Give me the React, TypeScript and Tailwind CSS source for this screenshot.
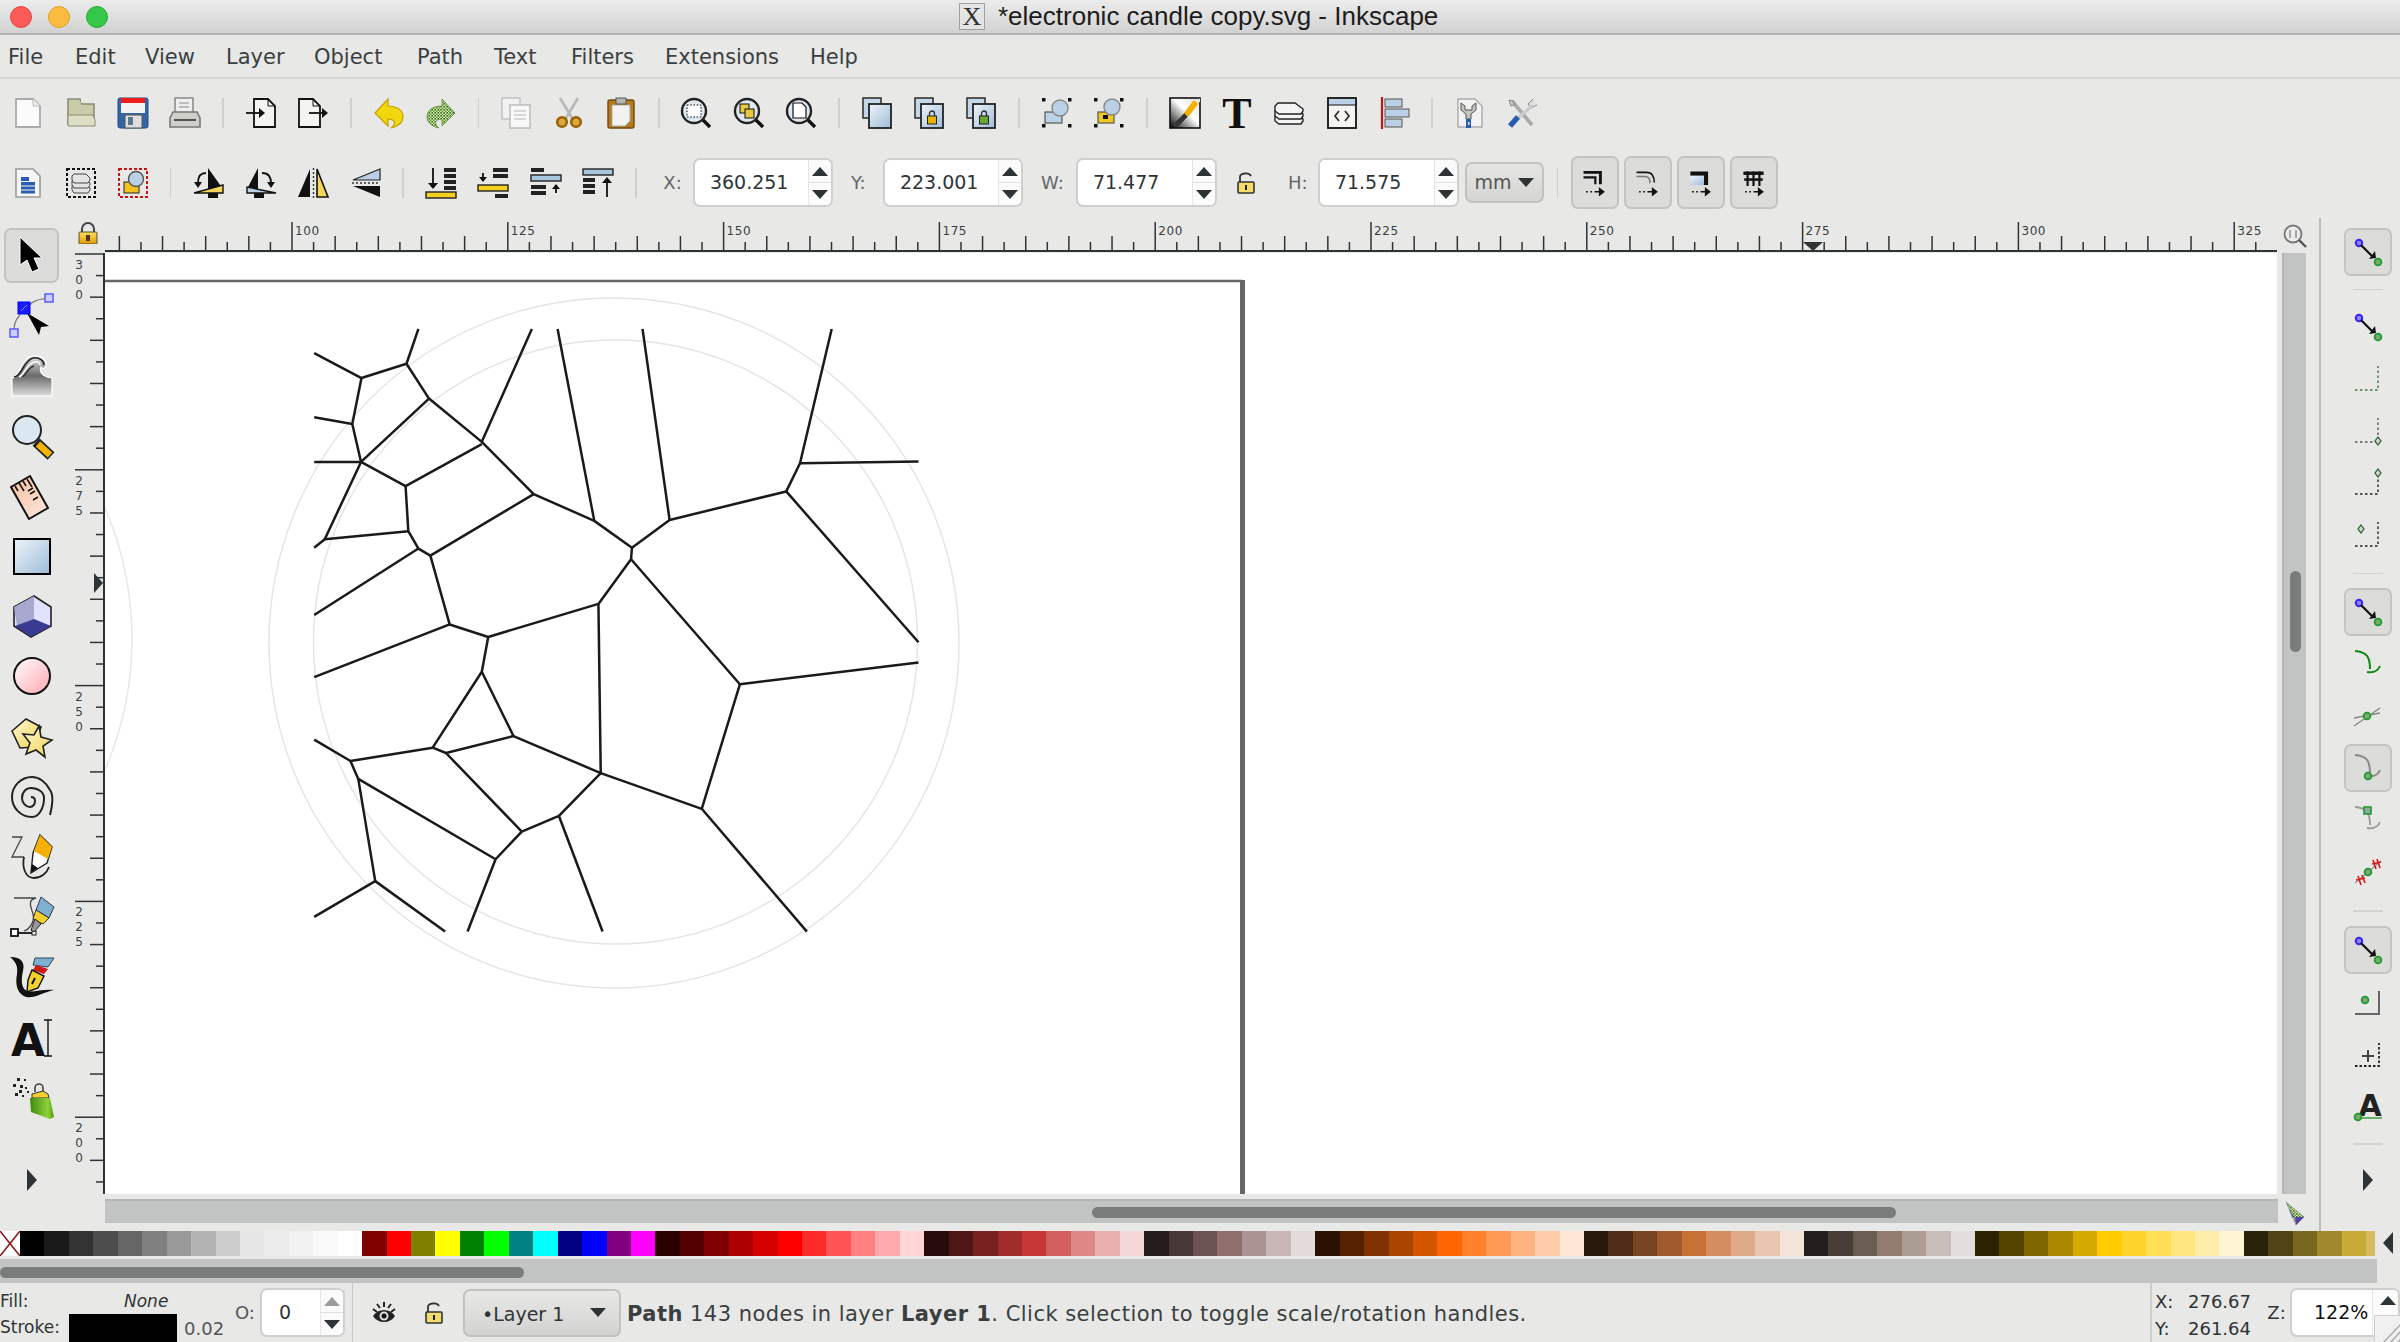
// Inkscape main window, macOS X11 build
import type { ReactNode } from "react"

const Ic = ({ s = 32, w, children }: { s?: number; w?: number; children: ReactNode }) => (
  <svg width={w ?? s} height={w ?? s} viewBox={`0 0 ${s} ${s}`} className="block overflow-visible">{children}</svg>
)

// Shared gradients
const Defs = () => (
  <svg className="absolute w-0 h-0">
    <defs>
      <linearGradient id="gBlue" x1="0" y1="0" x2="1" y2="1"><stop offset="0" stopColor="#eef4fa" /><stop offset="1" stopColor="#9dbcd8" /></linearGradient>
      <linearGradient id="gPink" x1="0" y1="0" x2="1" y2="1"><stop offset="0" stopColor="#fff" /><stop offset="1" stopColor="#ffa8b0" /></linearGradient>
      <linearGradient id="gYel" x1="0" y1="0" x2="1" y2="1"><stop offset="0" stopColor="#fffbd8" /><stop offset="1" stopColor="#f0d050" /></linearGradient>
      <linearGradient id="gPeach" x1="0" y1="0" x2="1" y2="1"><stop offset="0" stopColor="#f6bfa0" /><stop offset="1" stopColor="#fbe8de" /></linearGradient>
      <linearGradient id="gWave" x1="0" y1="0" x2="0" y2="1"><stop offset="0" stopColor="#e4e4e4" /><stop offset=".5" stopColor="#6a6a6a" /><stop offset="1" stopColor="#dedede" /></linearGradient>
      <linearGradient id="gBW" x1="0" y1="1" x2="1" y2="0"><stop offset="0" stopColor="#000" /><stop offset=".55" stopColor="#fff" /><stop offset="1" stopColor="#ddd" /></linearGradient>
      <linearGradient id="gGreen" x1="0" y1="0" x2="1" y2="0"><stop offset="0" stopColor="#3f8a10" /><stop offset=".75" stopColor="#8ed13c" /><stop offset="1" stopColor="#4e9a06" /></linearGradient>
      <linearGradient id="gGold" x1="0" y1="0" x2="0" y2="1"><stop offset="0" stopColor="#ffe060" /><stop offset="1" stopColor="#e09a00" /></linearGradient>
      <pattern id="pGreen" width="3" height="3" patternUnits="userSpaceOnUse"><rect width="3" height="3" fill="#dfe8d0" /><rect width="1.6" height="1.6" fill="#2f6b08" /><rect x="1.6" y="1.6" width="1.4" height="1.4" fill="#4e9a06" /></pattern>
    </defs>
  </svg>
)

const pageD = "M4 2h17l7 7v21H4z"
const undoD = "M2 16L15 2v7c9 0 15 4 15 11 0 5-4 9-12 11 3-2 4-5 3-7-1-1-3-2-6-2v7z"

const Lock = ({ x, y, c = "#e8b400" }: { x: number; y: number; c?: string }) => (
  <g transform={`translate(${x} ${y})`}>
    <path d="M2.5 6V3.5a2.5 2.5 0 0 1 5 0V6" fill="none" stroke="#333" strokeWidth="1.4" />
    <rect x=".5" y="6" width="9" height="8" fill={c} stroke="#222" />
  </g>
)

const OpenLock = () => (
  <svg width="18" height="22" viewBox="0 0 18 22" className="block">
    <path d="M3 10V5c0-4 9-5 11-1" fill="none" stroke="#333" strokeWidth="1.8" />
    <rect x="1" y="10" width="16" height="11" rx="1" fill="#f4dc6a" stroke="#333" strokeWidth="1.6" />
    <path d="M9 13v5" stroke="#222" strokeWidth="2" />
  </svg>
)

const MagBase = ({ children }: { children?: ReactNode }) => (
  <Ic>
    <circle cx="14" cy="14" r="12" fill="#dde8f1" stroke="#222" strokeWidth="2.4" />
    {children}
    <path d="M23 23l7 7" stroke="#111" strokeWidth="3.4" />
  </Ic>
)

const Handles = ({ children }: { children: ReactNode }) => (
  <Ic>
    {[[1, 1], [27, 1], [1, 27], [27, 27]].map(([x, y]) => (
      <rect key={`${x}${y}`} x={x} y={y} width="3.5" height="3.5" fill="#111" />
    ))}
    {children}
  </Ic>
)

const Slab = ({ y, c }: { y: number; c: string }) => (
  <rect x="1" y={y} width="30" height="6" fill={c} stroke="#222" strokeWidth="1.4" />
)
const Rows = ({ ys, x = 19, w = 12 }: { ys: number[]; x?: number; w?: number }) => (
  <g fill="#222">{ys.map(y => <rect key={y} x={x} y={y} width={w} height="4" />)}</g>
)

const Tri = ({ up, c = "#2e3436" }: { up?: boolean; c?: string }) => (
  <svg width="16" height="9" viewBox="0 0 16 9" className="block"><path d={up ? "M8 0l8 9H0z" : "M0 0h16L8 9z"} fill={c} /></svg>
)

const top = {
  new: <Ic><path d={pageD} fill="#fbfbfb" stroke="#aaa" strokeWidth="1.8" /><path d="M21 2v7h7" fill="#eee" stroke="#bbb" /></Ic>,
  open: <Ic><path d="M3 2h12l2 5h12v20H3z" fill="#c9cca9" stroke="#8b8e70" strokeWidth="1.6" /><path d="M3 18h25l2 5v6H3z" fill="#dcdec5" stroke="#8b8e70" /><path d="M16 3h6v3h-6z" fill="#e8e8dc" /></Ic>,
  save: <Ic><rect x="1" y="1" width="30" height="30" rx="2" fill="#3465a4" stroke="#204a87" /><rect x="4" y="1" width="24" height="5" fill="#ef1c1c" /><rect x="4" y="6" width="24" height="10" fill="#f2f2f2" /><rect x="8" y="18" width="17" height="13" fill="#ddd" stroke="#555" /><rect x="11" y="20" width="5" height="8" fill="#5a7890" /></Ic>,
  print: <Ic><path d="M6 1h18v16H6z" fill="#eee" stroke="#888" strokeWidth="1.5" /><path d="M10 6h10M10 10h10" stroke="#aaa" strokeWidth="1.4" /><path d="M4 15h24l3 6v9H1v-9z" fill="#d0d0ca" stroke="#777" strokeWidth="1.6" /><path d="M5 23h22" stroke="#555" strokeWidth="2" /></Ic>,
  import: <Ic><path d="M9 2h14l7 7v21H9z" fill="#f4f4f0" stroke="#111" strokeWidth="1.8" /><path d="M23 2v7h7" fill="none" stroke="#111" /><path d="M1 16h14" stroke="#111" strokeWidth="1.8" /><path d="M14 11l6 5-6 5z" fill="#111" /></Ic>,
  export: <Ic><path d="M2 2h14l7 7v21H2z" fill="#f4f4f0" stroke="#111" strokeWidth="1.8" /><path d="M16 2v7h7" fill="none" stroke="#111" /><path d="M12 16h16" stroke="#111" strokeWidth="1.8" /><path d="M25 11l6 5-6 5z" fill="#111" /></Ic>,
  undo: <Ic><path d={undoD} fill="#f2d70e" stroke="#c4a000" strokeWidth="1.2" /></Ic>,
  redo: <Ic><path transform="matrix(-1 0 0 1 32 0)" d={undoD} fill="url(#pGreen)" stroke="#5f8a3a" strokeWidth=".8" /></Ic>,
  copy: <Ic><rect x="2" y="1" width="18" height="21" fill="#f2f2f2" stroke="#c0c0c0" strokeWidth="1.4" /><rect x="10" y="8" width="20" height="23" fill="#f8f8f8" stroke="#b8b8b8" strokeWidth="1.4" /><path d="M14 14h12M14 18h12M14 22h12" stroke="#ccc" strokeWidth="1.4" /></Ic>,
  cut: <Ic><path d="M7 1l12 20M25 1L13 21" stroke="#b8b8b8" strokeWidth="2.6" /><circle cx="9" cy="25" r="4.8" fill="#dba73a" stroke="#9a6208" strokeWidth="2.6" /><circle cx="23" cy="25" r="4.8" fill="#dba73a" stroke="#9a6208" strokeWidth="2.6" /></Ic>,
  paste: <Ic><rect x="3" y="3" width="26" height="28" rx="2" fill="#b97a1a" stroke="#6e4a0e" strokeWidth="1.4" /><path d="M7 8h18v16l-5 5H7z" fill="#f2f2f0" stroke="#aaa" /><rect x="11" y="1" width="10" height="6" fill="#b5b5b0" stroke="#555" /></Ic>,
  zoomSel: <MagBase><rect x="7" y="8" width="14" height="12" fill="#fff" stroke="#111" strokeDasharray="1.6 1.6" /></MagBase>,
  zoomDraw: <MagBase><rect x="7" y="7" width="9" height="9" fill="#e8c840" stroke="#111" /><rect x="12" y="12" width="9" height="9" fill="#e8c840" stroke="#111" /></MagBase>,
  zoomPage: <MagBase><path d="M8 6h9l4 4v11H8z" fill="#fff" stroke="#111" strokeWidth="1.2" /></MagBase>,
  dup: <Ic><rect x="2" y="1" width="18" height="20" fill="#c5d8ea" stroke="#333" strokeWidth="1.6" /><rect x="8" y="7" width="22" height="24" fill="url(#gBlue)" stroke="#222" strokeWidth="1.8" /></Ic>,
  clone: <Ic><rect x="2" y="1" width="18" height="20" fill="#c5d8ea" stroke="#333" strokeWidth="1.6" /><rect x="8" y="7" width="22" height="24" fill="url(#gBlue)" stroke="#222" strokeWidth="1.8" /><Lock x={14} y={13} /></Ic>,
  unlink: <Ic><rect x="2" y="1" width="18" height="20" fill="#c5d8ea" stroke="#333" strokeWidth="1.6" /><rect x="8" y="7" width="22" height="24" fill="url(#gBlue)" stroke="#222" strokeWidth="1.8" /><Lock x={14} y={13} c="#6aa832" /></Ic>,
  group: <Handles><rect x="4" y="15" width="17" height="11" fill="#bcd2e8" stroke="#555" strokeWidth="1.2" /><circle cx="19" cy="11" r="8" fill="#b9d0e6" stroke="#888" strokeWidth="1.4" /></Handles>,
  ungroup: <Handles><rect x="5" y="15" width="16" height="11" fill="#f0c820" stroke="#555" strokeWidth="1.2" /><rect x="10" y="18" width="5" height="4" fill="#111" /><circle cx="19" cy="10" r="8" fill="#b9d0e6" stroke="#888" strokeWidth="1.4" /></Handles>,
  fill: <Ic><rect x="1" y="1" width="30" height="30" fill="url(#gBW)" stroke="#111" strokeWidth="1.6" /><path d="M31 1v4h-3z" fill="#e8e8e6" /><path d="M27 5l-10 13" stroke="#f4b000" strokeWidth="6" /><path d="M17 18L7 28" stroke="#333" strokeWidth="5" /></Ic>,
  text: <Ic><text x="16" y="31" textAnchor="middle" fontFamily="Liberation Serif" fontWeight="700" fontSize="44" fill="#111">T</text></Ic>,
  layers: <Ic><g fill="#f4f4f4" stroke="#222" strokeWidth="1.4"><path d="M2 19l3-3h19l6 6v2l-2 3H6l-4-3z" /><path d="M2 14l3-3h19l6 6v2l-2 3H6l-4-3z" /><path d="M2 9l3-3h17l8 6v2l-2 3H6l-4-3z" /></g></Ic>,
  xml: <Ic><rect x="2" y="1" width="28" height="30" fill="#f4f4f2" stroke="#111" strokeWidth="1.8" /><rect x="3" y="2" width="26" height="6" fill="#b9d0e6" /><path d="M3 8h26" stroke="#111" /><path d="M13 14l-4 5 4 5M19 14l4 5-4 5" fill="none" stroke="#333" strokeWidth="1.8" /></Ic>,
  align: <Ic><path d="M4 0v32" stroke="#cc1111" strokeWidth="2.2" /><rect x="7" y="2" width="17" height="8" fill="#b9d0e6" stroke="#555" /><rect x="7" y="12" width="24" height="8" fill="#b9d0e6" stroke="#555" /><rect x="7" y="22" width="17" height="8" fill="#b9d0e6" stroke="#555" /></Ic>,
  prefs: <Ic><path d={pageD} fill="#f2f2f2" stroke="#aaa" strokeWidth="1.4" /><path d="M7 6v7l5 4v5h5v-5l5-4V6l-4 3v4h-7V9z" fill="#c5c5c0" stroke="#555" /><path d="M12 22h5v9h-5z" fill="#2a5db0" /><path d="M14 25h1.5v3H14z" fill="#ddd" /></Ic>,
  tools: <Ic><path d="M6 4l20 24" stroke="#aaa" strokeWidth="3.6" /><path d="M27 2l-5 5 3 4 6-3" fill="#ddd" stroke="#888" /><path d="M27 8L11 22" stroke="#ccc" strokeWidth="3.2" /><path d="M12 20l-8 9" stroke="#2a5db0" strokeWidth="5.5" /><path d="M3 3l4 1 1 4-3 1z" fill="#ccc" stroke="#888" /></Ic>,

  selAll: <Ic><path d={pageD} fill="#f6f6f6" stroke="#999" strokeWidth="1.6" /><path d="M9 10h8v4H9zM9 15h14v3.4H9zM9 19.4h14v3.2H9zM9 23.6h14v3H9z" fill="#2a5db0" /></Ic>,
  selLayers: <Ic><rect x="2" y="2" width="28" height="28" fill="none" stroke="#111" strokeWidth="2" strokeDasharray="3 2" /><g fill="#e4e4e4" stroke="#444"><path d="M7 19l2-2h12l4 4v2l-2 3H9l-2-3z" /><path d="M7 14l2-2h12l4 4v2l-2 3H9l-2-3z" /><path d="M7 9l2-2h12l4 4v2l-2 3H9l-2-3z" /></g></Ic>,
  invert: <Ic><rect x="2" y="2" width="28" height="28" fill="none" stroke="#d01010" strokeWidth="2" strokeDasharray="3 2" /><rect x="7" y="15" width="15" height="11" fill="#f3c220" stroke="#222" /><circle cx="19" cy="12" r="7.5" fill="#b9d0e6" stroke="#555" strokeWidth="1.4" /></Ic>,
  rotL: <Ic><path d="M16 1l15 21H16z" fill="#111" /><path d="M2 26l29-8v8z" fill="#f3d65a" stroke="#111" strokeWidth="1.4" /><rect x="16" y="26" width="10" height="5" fill="#111" /><path d="M14 6C8 6 6 10 6 16" fill="none" stroke="#111" strokeWidth="1.8" /><path d="M2 15l4 6 4-6z" fill="#111" /></Ic>,
  rotR: <Ic><path d="M13 1L2 22h11z" fill="#111" /><path d="M2 20v6h29z" fill="#b9d0e6" stroke="#111" strokeWidth="1.4" /><rect x="9" y="26" width="10" height="5" fill="#111" /><path d="M17 6c7 0 9 4 9 10" fill="none" stroke="#111" strokeWidth="1.8" /><path d="M22 15l4 6 4-6z" fill="#111" /></Ic>,
  flipH: <Ic><path d="M13 2L1 30h12z" fill="#111" /><path d="M20 2l11 28H20z" fill="#f3d65a" stroke="#111" strokeWidth="1.6" /><path d="M16.5 1v30" stroke="#333" strokeDasharray="2 2" strokeWidth="1.4" /></Ic>,
  flipV: <Ic><path d="M30 2L3 13h27z" fill="#b9d0e6" stroke="#222" strokeWidth="1.2" /><path d="M2 16h28" stroke="#333" strokeDasharray="2 2" strokeWidth="1.4" /><path d="M30 30L3 19h27z" fill="#111" /></Ic>,
  lowerBottom: <Ic><Rows ys={[1, 7, 13, 19]} /><path d="M8 1v18" stroke="#111" strokeWidth="1.8" /><path d="M3 16l5 6 5-6z" fill="#111" /><Slab y={25} c="#f3d020" /></Ic>,
  lower: <Ic><Rows ys={[1, 7]} x={16} w={15} /><Rows ys={[27]} x={18} w={13} /><path d="M6 6v8" stroke="#111" strokeWidth="1.8" /><path d="M2 10l4 5 4-5z" fill="#111" /><Slab y={18} c="#f3d020" /></Ic>,
  raise: <Ic><Rows ys={[1]} x={1} w={13} /><Slab y={8} c="#a9c6df" /><Rows ys={[18, 24]} x={1} w={15} /><path d="M26 18v8" stroke="#111" strokeWidth="1.8" /><path d="M22 22l4-5 4 5z" fill="#111" /></Ic>,
  raiseTop: <Ic><Slab y={2} c="#a9c6df" /><Rows ys={[11, 17, 23]} x={1} w={12} /><path d="M25 12v18" stroke="#111" strokeWidth="1.8" /><path d="M20 16l5-6 5 6z" fill="#111" /></Ic>,
}

const dashArrow = <path d="M6 27h2M11 27h2M16 27h8M22 23l5 4-5 4z" stroke="#111" strokeWidth="1.6" fill="#111" />

const affect = [
  <Ic w={27} key="a"><path d="M3 4h20v14" fill="none" stroke="#111" strokeWidth="3.4" /><path d="M3 10h14v8" fill="none" stroke="#111" strokeWidth="2.6" />{dashArrow}</Ic>,
  <Ic w={27} key="b"><path d="M3 4h12c6 0 9 4 9 12" fill="none" stroke="#111" strokeWidth="1.8" /><path d="M3 9h10c4 0 6 3 6 8" fill="none" stroke="#777" strokeWidth="1.8" />{dashArrow}</Ic>,
  <Ic w={27} key="c"><path d="M4 3h21v16h-5V8H4z" fill="#111" /><path d="M4 8h16v11H4z" fill="url(#gBlue)" />{dashArrow}</Ic>,
  <Ic w={27} key="d"><rect x="4" y="3" width="24" height="4" fill="#111" /><path d="M5 11h22v3H5z" fill="#111" /><path d="M9 3v17M16 3v17M23 3v17" stroke="#111" strokeWidth="2.6" />{dashArrow}</Ic>,
]

const gNode = (x: number, y: number) => <circle cx={x} cy={y} r="3.4" fill="#7ca96f" stroke="#1f9a30" strokeWidth="1.8" />
const diamond = (x: number, y: number) => <path d={`M${x} ${y - 4}l3 4-3 4-3-4z`} fill="#cfd8cf" stroke="#2c5a2c" strokeWidth="1.2" />
const snapMain = <Ic><circle cx="7" cy="7" r="3.2" fill="#8a85ff" stroke="#3a22ff" strokeWidth="2" /><path d="M9 9l11 11" stroke="#111" strokeWidth="2.2" /><path d="M17 23l7-1-1-7z" fill="#111" />{gNode(26, 26)}</Ic>
const dashL = (c: string) => <path d="M3 27h23V3" fill="none" stroke={c} strokeWidth="1.4" strokeDasharray="2.5 2.5" />

const snapA = [
  snapMain,
  <Ic key="1">{dashL("#3f7a3f")}</Ic>,
  <Ic key="2">{dashL("#555")}{diamond(26, 26)}</Ic>,
  <Ic key="3">{dashL("#222")}{diamond(26, 6)}</Ic>,
  <Ic key="4">{dashL("#222")}{diamond(9, 10)}</Ic>,
]
const snapB = [
  snapMain,
  <Ic key="1"><path d="M3 3c12 1 15 6 15 18M15 24c6 1 11-1 13-6" fill="none" stroke="#118a11" strokeWidth="2" /></Ic>,
  <Ic key="2"><path d="M2 26L28 8M2 18L28 13" fill="none" stroke="#888" strokeWidth="1.4" />{gNode(15, 16)}</Ic>,
  <Ic key="3"><path d="M3 3c12 1 15 6 15 18M15 24c6 1 11-1 13-6" fill="none" stroke="#888" strokeWidth="2" />{gNode(16, 24)}</Ic>,
  <Ic key="4"><path d="M3 3c12 1 15 6 15 18M15 24c6 1 11-1 13-6" fill="none" stroke="#999" strokeWidth="1.8" /><rect x="12" y="3" width="7" height="7" fill="#8ca8a0" stroke="#1f9a30" strokeWidth="1.6" /></Ic>,
  <Ic key="5"><path d="M3 27L29 5" stroke="#999" strokeWidth="1.4" /><path d="M6 20l3 9M10 19l3 8M4 24l9-2M21 4l3 9M25 3l3 9M20 8l9-2" stroke="#d81a1a" strokeWidth="1.6" />{gNode(16, 16)}</Ic>,
]
const snapC = [
  snapMain,
  <Ic key="1"><path d="M3 28h24V5" fill="none" stroke="#666" strokeWidth="2" />{gNode(13, 14)}</Ic>,
  <Ic key="2"><path d="M3 28h24V5" fill="none" stroke="#222" strokeWidth="1.8" strokeDasharray="2.5 2" /><path d="M10 18h12M16 12v12" stroke="#444" strokeWidth="2" /></Ic>,
  <Ic key="3"><text x="18" y="26" textAnchor="middle" fontFamily="DejaVu Sans" fontWeight="700" fontSize="30" fill="#222">A</text><path d="M6 28h24" stroke="#49a349" strokeWidth="1.6" />{gNode(6, 27)}</Ic>,
]

const tools = [
  <Ic s={40} key="sel"><path d="M8 2v28l7-5 5 12 7-3-5-11h8z" fill="#000" stroke="#fff" strokeWidth="1" /></Ic>,
  <Ic s={40} key="node"><path d="M15 15C18 5 28 4 38 3M8 20c-6 6-6 12-6 18" fill="none" stroke="#777" strokeWidth="1.2" /><rect x="6" y="7" width="12" height="12" fill="#1a1aff" stroke="#00f" /><path d="M9 16l6-6" stroke="#88f" /><rect x="33" y="-1" width="8" height="8" fill="#cfcfff" stroke="#5a5aff" strokeWidth="1.5" /><rect x="-2" y="34" width="8" height="8" fill="#cfcfff" stroke="#5a5aff" strokeWidth="1.5" /><path d="M15 18l22 13-8 1-2 8z" fill="#000" /></Ic>,
  <Ic s={40} key="tweak"><path d="M0 23C8 23 9 3 20 1c8-1 14 3 14 9 0 4-4 4-5 2-2 4 1 10 11 11v18H0z" fill="url(#gWave)" stroke="#fff" strokeWidth="1.2" /><path d="M2 22C10 21 12 5 21 3c7-1 11 3 11 7" fill="none" stroke="#222" strokeWidth="1.5" /><path d="M7 22C12 20 15 9 22 7c4-1 6 1 6 3" fill="none" stroke="#fff" strokeWidth="1.6" /><path d="M11 22c3-3 6-10 11-11" fill="none" stroke="#333" strokeWidth="1.4" /></Ic>,
  <Ic s={40} key="zoom"><path d="M24 26l15 14" stroke="#222" strokeWidth="10" /><path d="M26 28l12 11" stroke="#f6b400" strokeWidth="6.5" /><circle cx="15" cy="14" r="14" fill="#dbe8f2" stroke="#222" strokeWidth="2" /></Ic>,
  <Ic s={40} key="measure"><path d="M-1 11L18 0l18 32-19 11z" fill="url(#gPeach)" stroke="#111" strokeWidth="2" /><path d="M3 10l3 5M7 7l5 8M11 5l3 5M15 3l5 8M21 12l-5 3M18 18l5-3M21 24l5-3" stroke="#111" strokeWidth="1.5" /></Ic>,
  <Ic s={40} key="rect"><rect x="2" y="3" width="36" height="35" fill="url(#gBlue)" stroke="#000" strokeWidth="2" /></Ic>,
  <Ic s={40} key="3d"><path d="M2 11L22 0l17 11v19L19 41 2 30z" fill="#e0e0ff" stroke="#222" strokeWidth="1.6" /><path d="M2 11l20-11 0 23L5 30z" fill="#a8a8d0" /><path d="M22 23l17 7-20 11L3 30z" fill="#3a3a90" /></Ic>,
  <Ic s={40} key="circle"><circle cx="20" cy="20" r="18" fill="url(#gPink)" stroke="#111" strokeWidth="2" /></Ic>,
  <Ic s={40} key="star"><path d="M0 14L14 2l15 8-7 20-14 1z" fill="url(#gYel)" stroke="#222" strokeWidth="1.6" /><path d="M27 9l2 11 11 3-9 6 2 11-9-7-10 4 4-11-7-9 11 1z" fill="url(#gYel)" stroke="#222" strokeWidth="1.6" /></Ic>,
  <Ic s={40} key="spiral"><path d="M38 38C41 26 41 17 38 13C34 5 27 0 20 0C9 0 0 9 0 20C0 31 9 40 20 40C27 40 32 31 32 21C32 15 26 11 19 11C14 11 10 15 10 21C10 26 14 30 18 30C21 30 23 27 23 24C23 21 21 20 19 20" fill="none" stroke="#222" strokeWidth="2" /></Ic>,
  <Ic s={40} key="pencil"><path d="M0 0H10L0 20H12" fill="none" stroke="#444" strokeWidth="1.3" /><path d="M12 20c-2 10 1 21 10 21 7 0 13-5 15-11" fill="none" stroke="#222" strokeWidth="1.8" /><path d="M19 36L21 16L28 -2L40 10L35 26Z" fill="#fff" stroke="#222" strokeWidth="1.4" /><path d="M22 14L28 -2L40 10L36 22Z" fill="#f5b000" /><path d="M19 36L20 27L26 31Z" fill="#111" /></Ic>,
  <Ic s={40} key="pen"><path d="M2 1h22c-9 2-5 9-3 16 2 7-3 15-9 17" fill="none" stroke="#444" strokeWidth="1.3" /><rect x="-1" y="32" width="7" height="7" fill="#fff" stroke="#111" strokeWidth="1.8" /><path d="M6 36h14" stroke="#111" strokeWidth="1.8" /><rect x="20" y="34" width="4" height="4" fill="#fff" stroke="#111" /><path d="M29 0l13 10-5 11-13-8z" fill="#7fb0cf" stroke="#335" /><path d="M24 13l13 8-6 6-10-5z" fill="#f3d030" stroke="#333" /><path d="M23 22l6 5-7 8-3-2z" fill="#999" stroke="#222" /></Ic>,
  <Ic s={40} key="callig"><path d="M-2 0c12 0 15 6 13 14-2 9-2 17 4 20 6 2 14-2 27-1-10 2-20 9-28 7C5 37 3 27 5 17 6 9 4 5-2 0z" fill="#111" /><path d="M23 1h19l-6 9-15-2z" fill="#7fb0cf" stroke="#345" /><path d="M24 8l12 4-4 5-11-4z" fill="#d01818" /><path d="M20 13l12 6-6 12-11 4 1-12z" fill="#f3d030" stroke="#111" strokeWidth="1.4" /><path d="M20 27l3-6" stroke="#111" strokeWidth="2" /></Ic>,
  <Ic s={40} key="textTool"><text x="16" y="38" textAnchor="middle" fontFamily="DejaVu Sans" fontWeight="700" fontSize="44" fill="#111">A</text><path d="M32 2h8M36 2v36M32 38h8" stroke="#111" strokeWidth="1.4" /></Ic>,
  <Ic s={40} key="spray"><path d="M1 6h3v3H1zM5 0h3v3H5zM8 7h3v3H8zM3 15h3v3H3zM7 12h3v3H7zM12 1h2v2h-2zM13 9h2v2h-2zM10 17h2v2h-2zM15 13h2v2h-2z" fill="#222" /><path d="M23 14v-4a4 4 0 0 1 8 0v4" fill="none" stroke="#444" strokeWidth="1.6" /><path d="M20 16l11-3 5 3 1 4H20z" fill="#f3d030" stroke="#333" /><path d="M18 20h20l4 19-4 2-19-7z" fill="url(#gGreen)" /></Ic>,
]

const ticksH = Array.from({ length: 101 }, (_, i) => i)
const hLabels = ["100", "125", "150", "175", "200", "225", "250", "275", "300", "325"]
const vLabels = ["300", "275", "250", "225", "200"]

// Ruler above the canvas
const HRuler = () => (
  <svg width="2172" height="35" viewBox="0 0 2172 35" className="block shrink-0">
    {ticksH.map(i => {
      const x = 187 + (i - 8) * 21.58
      if (x < 2 || x > 2172) return null
      const k = i - 8
      const y1 = k % 10 === 0 ? 4 : k % 2 === 0 ? 18 : 24
      return <path key={i} d={`M${x} ${y1}V33`} stroke="#2e3436" strokeWidth="1.5" />
    })}
    {hLabels.map((t, i) => (
      <text key={t} x={190 + i * 215.8} y="17" fontFamily="DejaVu Sans" fontSize="12" letterSpacing=".6" fill="#3a3f41">{t}</text>
    ))}
    <path d="M0 33h2172" stroke="#2e3436" strokeWidth="2" />
    <path d="M1698 24h20l-10 9z" fill="#2e3436" />
  </svg>
)

// Ruler left of the canvas
const VRuler = () => (
  <svg width="30" height="941" viewBox="0 0 30 941" className="block shrink-0">
    {Array.from({ length: 45 }, (_, k) => {
      const y = 1 + k * 21.58
      const x1 = k % 10 === 0 ? 0 : k % 2 === 0 ? 15 : 21
      return <path key={k} d={`M${x1} ${y}H29`} stroke="#2e3436" strokeWidth="1.5" />
    })}
    {vLabels.map((t, i) => t.split("").map((d, j) => (
      <text key={`${t}${j}`} x="4" y={16 + i * 215.8 + j * 15} textAnchor="middle" fontFamily="DejaVu Sans" fontSize="12" fill="#3a3f41">{d}</text>
    )))}
    <path d="M29 0v941" stroke="#2e3436" strokeWidth="2" />
    <path d="M19 320l9 10-9 10z" fill="#2e3436" />
  </svg>
)

const voronoi = [
  "M118 186L221 242L319 210L345 132",
  "M221 242L201 345L220 430",
  "M118 330L201 345",
  "M319 210L368 288L483 385L592 132",
  "M368 288L220 430",
  "M118 430L220 430",
  "M220 430L317 484L483 390",
  "M483 385L596 502L728 562L810 622L892 560L1146 496L1176 433L1245 132",
  "M1176 433L1434 429",
  "M1146 496L1434 834",
  "M728 562L648 132",
  "M892 560L833 132",
  "M317 484L323 585L345 624L371 640L596 502",
  "M323 585L141 603L220 430",
  "M141 603L118 622",
  "M345 624L118 773",
  "M371 640L413 794L497 822L737 748L808 648L810 622",
  "M413 794L118 912",
  "M497 822L483 900L376 1070L197 1100L118 1052",
  "M483 900L552 1044L405 1082L376 1070",
  "M552 1044L742 1127L737 748",
  "M808 648L1045 928L1434 879",
  "M1045 928L962 1207L742 1127",
  "M962 1207L1191 1482",
  "M742 1127L651 1223L570 1258L405 1082",
  "M651 1223L746 1482",
  "M570 1258L513 1320L214 1140L197 1100",
  "M214 1140L251 1369L118 1449",
  "M251 1369L403 1482",
  "M513 1320L452 1482",
]

// Document drawing on the canvas
const Drawing = () => (
  <svg width="2172" height="941" viewBox="0 0 2172 941" className="absolute inset-0">
    <circle cx="-304" cy="386" r="331" fill="none" stroke="#e6e6e6" strokeWidth="1.4" />
    <circle cx="509" cy="390" r="345" fill="none" stroke="#e4e4e4" strokeWidth="1.4" />
    <circle cx="510.5" cy="389" r="302" fill="none" stroke="#e4e4e4" strokeWidth="1.4" />
    <g transform="translate(155 17) scale(.4592 .4464)">
      {voronoi.map(d => <path key={d} d={d} fill="none" stroke="#1a1a1a" strokeWidth="2.5" vectorEffect="non-scaling-stroke" strokeLinejoin="round" />)}
    </g>
    <path d="M0 28H1137.5" stroke="#666" strokeWidth="2.4" />
    <path d="M1137.5 27V941" stroke="#666" strokeWidth="5" />
  </svg>
)

const paletteColors = [
  "bg-[#000000]", "bg-[#1a1a1a]", "bg-[#333333]", "bg-[#4d4d4d]", "bg-[#666666]", "bg-[#808080]", "bg-[#999999]", "bg-[#b3b3b3]", "bg-[#cccccc]", "bg-[#e6e6e6]", "bg-[#ececec]", "bg-[#f2f2f2]", "bg-[#f9f9f9]", "bg-[#ffffff]",
  "bg-[#800000]", "bg-[#ff0000]", "bg-[#808000]", "bg-[#ffff00]", "bg-[#008000]", "bg-[#00ff00]", "bg-[#008080]", "bg-[#00ffff]", "bg-[#000080]", "bg-[#0000ff]", "bg-[#800080]", "bg-[#ff00ff]",
  "bg-[#2b0000]", "bg-[#550000]", "bg-[#800001]", "bg-[#aa0000]", "bg-[#d40000]", "bg-[#ff0001]", "bg-[#ff2a2a]", "bg-[#ff5555]", "bg-[#ff8080]", "bg-[#ffaaaa]", "bg-[#ffd5d5]",
  "bg-[#280b0b]", "bg-[#501616]", "bg-[#782121]", "bg-[#a02c2c]", "bg-[#c83737]", "bg-[#d35f5f]", "bg-[#de8787]", "bg-[#e9afaf]", "bg-[#f4d7d7]",
  "bg-[#241c1c]", "bg-[#483737]", "bg-[#6c5353]", "bg-[#916f6f]", "bg-[#ac9393]", "bg-[#c8b7b7]", "bg-[#e3dbdb]",
  "bg-[#2b1100]", "bg-[#552200]", "bg-[#803300]", "bg-[#aa4400]", "bg-[#d45500]", "bg-[#ff6600]", "bg-[#ff7f2a]", "bg-[#ff9955]", "bg-[#ffb380]", "bg-[#ffccaa]", "bg-[#ffe6d5]",
  "bg-[#28170b]", "bg-[#502d16]", "bg-[#784421]", "bg-[#a05a2c]", "bg-[#c87137]", "bg-[#d38d5f]", "bg-[#deaa87]", "bg-[#e9c6af]", "bg-[#f4e3d7]",
  "bg-[#241f1c]", "bg-[#483e37]", "bg-[#6c5d53]", "bg-[#917c6f]", "bg-[#ac9d93]", "bg-[#c8beb7]", "bg-[#e3dedb]",
  "bg-[#2b2200]", "bg-[#554400]", "bg-[#806600]", "bg-[#aa8800]", "bg-[#d4aa00]", "bg-[#ffcc00]", "bg-[#ffd42a]", "bg-[#ffdd55]", "bg-[#ffe680]", "bg-[#ffeeaa]", "bg-[#fff6d5]",
  "bg-[#28220b]", "bg-[#504416]", "bg-[#786721]", "bg-[#a0892c]", "bg-[#c8ab37]", "bg-[#d3bc5f]",
]

const menu = [
  { t: "File", w: "w-[67px]" }, { t: "Edit", w: "w-[70px]" }, { t: "View", w: "w-[81px]" }, { t: "Layer", w: "w-[88px]" },
  { t: "Object", w: "w-[103px]" }, { t: "Path", w: "w-[77px]" }, { t: "Text", w: "w-[77px]" }, { t: "Filters", w: "w-[94px]" },
  { t: "Extensions", w: "w-[145px]" }, { t: "Help", w: "w-[60px]" },
]

const Tool = ({ children }: { children: ReactNode }) => (
  <div className="w-[52.4px] shrink-0 flex items-center justify-center">{children}</div>
)
const Sep = () => (
  <div className="w-[23px] shrink-0 flex justify-center"><div className="w-[1.5px] h-[30px] bg-[#d0d0ce]" /></div>
)

const SpinCol = ({ up = "#2e3436" }: { up?: string }) => (
  <div className="w-[23px] bg-[#fbfbfb] border-l border-[#e6e6e6] flex flex-col">
    <div className="flex-1 flex items-center justify-center border-b border-[#e0e0e0]"><Tri up c={up} /></div>
    <div className="flex-1 flex items-center justify-center"><Tri /></div>
  </div>
)

const Spin = ({ value, w }: { value: string; w: string }) => (
  <div className={`${w} h-[49px] shrink-0 flex bg-white border-2 border-[#cfcfcd] rounded-[7px] overflow-hidden`}>
    <div className="flex-1 flex items-center pl-[15px] text-[19px] text-[#2e3436] -mt-[1px]">{value}</div>
    <SpinCol />
  </div>
)

const ToggleBtn = ({ children }: { children: ReactNode }) => (
  <div className="w-[48px] h-[53px] shrink-0 flex items-center justify-center bg-[#dcdcda] border-2 border-[#c4c4c2] rounded-[7px]">{children}</div>
)

const SnapItem = ({ on, children }: { on?: boolean; children: ReactNode }) => (
  <div className="h-[52px] flex items-center justify-center">
    <div className={`w-[48px] h-[48px] flex items-center justify-center rounded-[7px] border-2 ${on ? "bg-[#dcdcda] border-[#c4c4c2]" : "border-transparent"}`}>{children}</div>
  </div>
)
const SnapSep = ({ h }: { h: string }) => (
  <div className={`${h} flex items-center justify-center`}><div className="w-[30px] h-[1.5px] bg-[#d2d2d0]" /></div>
)

export default function App() {
  return (
    <div className="relative w-[2400px] h-[1342px] overflow-hidden flex flex-col bg-[#e8e8e6] text-[#2e3436] font-['DejaVu_Sans',sans-serif]">
      <Defs />

      {/* Title bar */}
      <div className="h-[35px] shrink-0 flex items-center relative bg-gradient-to-b from-[#ececec] to-[#d2d2d2] border-b-2 border-[#b2b2b2]">
        <div className="flex items-center gap-[16px] pl-[10px]">
          <div className="w-[22px] h-[22px] rounded-full bg-[#fc5b57] border border-[#e2463f]" />
          <div className="w-[22px] h-[22px] rounded-full bg-[#fdbc40] border border-[#dfa023]" />
          <div className="w-[22px] h-[22px] rounded-full bg-[#34c748] border border-[#27aa35]" />
        </div>
        <div className="flex-1 flex items-center pl-[851px]">
          <div className="w-[26px] h-[27px] flex items-center justify-center bg-[#e4e4e4] border border-[#a0a0a0] font-['Liberation_Serif',serif] text-[26px] text-[#333] leading-none">X</div>
          <span className="ml-[13px] -mt-[1px] font-['Liberation_Sans',sans-serif] text-[26px] text-[#1c1c1c] leading-none">*electronic candle copy.svg - Inkscape</span>
        </div>
      </div>

      {/* Menu */}
      <div className="h-[44px] shrink-0 flex items-center pl-[8px] pt-[4px] border-b-2 border-[#d4d4d2] text-[21px] text-[#3a3f41]">
        {menu.map(m => <div key={m.t} className={`${m.w} shrink-0`}>{m.t}</div>)}
      </div>

      {/* Commands toolbar */}
      <div className="h-[68px] shrink-0 flex items-center pl-[2px]">
        <Tool>{top.new}</Tool><Tool>{top.open}</Tool><Tool>{top.save}</Tool><Tool>{top.print}</Tool><Sep />
        <Tool>{top.import}</Tool><Tool>{top.export}</Tool><Sep />
        <Tool>{top.undo}</Tool><Tool>{top.redo}</Tool><Sep />
        <Tool>{top.copy}</Tool><Tool>{top.cut}</Tool><Tool>{top.paste}</Tool><Sep />
        <Tool>{top.zoomSel}</Tool><Tool>{top.zoomDraw}</Tool><Tool>{top.zoomPage}</Tool><Sep />
        <Tool>{top.dup}</Tool><Tool>{top.clone}</Tool><Tool>{top.unlink}</Tool><Sep />
        <Tool>{top.group}</Tool><Tool>{top.ungroup}</Tool><Sep />
        <Tool>{top.fill}</Tool><Tool>{top.text}</Tool><Tool>{top.layers}</Tool><Tool>{top.xml}</Tool><Tool>{top.align}</Tool><Sep />
        <Tool>{top.prefs}</Tool><Tool>{top.tools}</Tool>
      </div>

      {/* Selector controls */}
      <div className="h-[71px] shrink-0 flex items-center pl-[2px]">
        <Tool>{top.selAll}</Tool><Tool>{top.selLayers}</Tool><Tool>{top.invert}</Tool><Sep />
        <Tool>{top.rotL}</Tool><Tool>{top.rotR}</Tool><Tool>{top.flipH}</Tool><Tool>{top.flipV}</Tool><Sep />
        <Tool>{top.lowerBottom}</Tool><Tool>{top.lower}</Tool><Tool>{top.raise}</Tool><Tool>{top.raiseTop}</Tool><Sep />
        <div className="w-[45.6px] shrink-0 pl-[16px] text-[18px] text-[#666]">X:</div>
        <Spin value="360.251" w="w-[140px]" />
        <div className="w-[50px] shrink-0 pl-[18px] text-[18px] text-[#666]">Y:</div>
        <Spin value="223.001" w="w-[140px]" />
        <div className="w-[53px] shrink-0 pl-[18px] text-[18px] text-[#666]">W:</div>
        <Spin value="71.477" w="w-[141px]" />
        <div className="w-[58px] shrink-0 flex justify-center"><OpenLock /></div>
        <div className="w-[43px] shrink-0 pl-[13px] text-[18px] text-[#666]">H:</div>
        <Spin value="71.575" w="w-[141px]" />
        <div className="ml-[6px] w-[79px] h-[41px] shrink-0 flex items-center justify-center gap-[7px] bg-gradient-to-b from-[#e6e6e4] to-[#d4d4d2] border-2 border-[#c2c2c0] rounded-[7px] text-[19px] text-[#555]">mm <Tri /></div>
        <div className="w-[27px] shrink-0 flex justify-center"><div className="w-[1.5px] h-[30px] bg-[#d0d0ce]" /></div>
        <div className="flex gap-[5px]">
          {affect.map((a, i) => <ToggleBtn key={i}>{a}</ToggleBtn>)}
        </div>
      </div>

      {/* Workspace */}
      <div className="h-[1013px] shrink-0 flex">
        <div className="w-[75px] shrink-0 pt-[7px] flex flex-col">
          {tools.map((t, i) => (
            <div key={i} className="w-[63px] h-[60.2px] shrink-0 flex items-center justify-center">
              {i === 0 ? <div className="w-[55px] h-[55px] flex items-center justify-center bg-[#dcdcda] border-2 border-[#c4c4c2] rounded-[7px]">{t}</div> : t}
            </div>
          ))}
          <div className="w-[63px] mt-[41px] flex justify-center">
            <svg width="10" height="22" viewBox="0 0 10 22"><path d="M0 0l10 11L0 22z" fill="#2e3436" /></svg>
          </div>
        </div>

        <div className="w-[2244px] shrink-0 flex flex-col">
          <div className="h-[35px] flex">
            <div className="w-[30px] shrink-0 pl-[3px] pt-[4px]">
              <svg width="20" height="22" viewBox="0 0 20 22"><path d="M4 10V7a6 6 0 0 1 12 0v3" fill="none" stroke="#444" strokeWidth="2" /><rect x="1" y="10" width="18" height="12" rx="1" fill="url(#gGold)" stroke="#553" /><rect x="8" y="13" width="4" height="6" fill="#532" /></svg>
            </div>
            <HRuler />
            <div className="flex-1 pl-[6px] pt-[6px]">
              <svg width="24" height="24" viewBox="0 0 24 24"><circle cx="10" cy="10" r="8.5" fill="#ececec" stroke="#777" strokeWidth="1.8" /><path d="M16 16l7 7" stroke="#555" strokeWidth="2.4" /><path d="M7 6v8M13 6v8" stroke="#888" strokeWidth="1.4" /></svg>
            </div>
          </div>

          <div className="h-[941px] flex">
            <VRuler />
            <div className="relative w-[2172px] shrink-0 bg-white overflow-hidden"><Drawing /></div>
            <div className="ml-[5px] w-[24px] shrink-0 bg-[#c2c4c3] border-l-2 border-[#b4b6b5] flex flex-col items-center pt-[318px]">
              <div className="w-[11px] h-[81px] rounded-full bg-[#7a7c7c]" />
            </div>
          </div>

          <div className="flex-1 flex pt-[5px] pl-[30px]">
            <div className="w-[2173px] h-[24px] shrink-0 bg-[#c2c4c3] border-t-2 border-[#b4b6b5] pl-[987px] pt-[6px]">
              <div className="w-[804px] h-[11px] rounded-full bg-[#7a7c7c]" />
            </div>
            <div className="pl-[6px] pt-[2px]">
              <svg width="22" height="24" viewBox="0 0 22 24">
                <path d="M2 1l18 15-8 8z" fill="url(#pGreen)" stroke="#789" strokeWidth=".6" />
                <path d="M11 16l9 0-8 8z" fill="#5a3fa8" />
                <path d="M5 8l6 8-3 1z" fill="#44a" opacity=".5" />
              </svg>
            </div>
          </div>
        </div>

        <div className="w-[81px] shrink-0 border-l-2 border-[#bcbcba] pl-[21px] pt-[8px] flex flex-col">
          <div className="w-[52px] flex flex-col">
            <SnapItem on>{snapA[0]}</SnapItem>
            <SnapSep h="h-[23px]" />
            <SnapItem>{snapA[0]}</SnapItem>
            <SnapItem>{snapA[1]}</SnapItem>
            <SnapItem>{snapA[2]}</SnapItem>
            <SnapItem>{snapA[3]}</SnapItem>
            <SnapItem>{snapA[4]}</SnapItem>
            <SnapSep h="h-[25px]" />
            <SnapItem on>{snapB[0]}</SnapItem>
            <SnapItem>{snapB[1]}</SnapItem>
            <SnapItem>{snapB[2]}</SnapItem>
            <SnapItem on>{snapB[3]}</SnapItem>
            <SnapItem>{snapB[4]}</SnapItem>
            <SnapItem>{snapB[5]}</SnapItem>
            <SnapSep h="h-[26px]" />
            <SnapItem on>{snapC[0]}</SnapItem>
            <SnapItem>{snapC[1]}</SnapItem>
            <SnapItem>{snapC[2]}</SnapItem>
            <SnapItem>{snapC[3]}</SnapItem>
            <SnapSep h="h-[24px]" />
            <div className="h-[48px] flex items-center justify-center">
              <svg width="10" height="22" viewBox="0 0 10 22"><path d="M0 0l10 11L0 22z" fill="#2e3436" /></svg>
            </div>
          </div>
        </div>
      </div>

      {/* Palette */}
      <div className="h-[28px] shrink-0 flex">
        <div className="w-[2375px] h-[25px] shrink-0 flex overflow-hidden">
          <div className="w-[20px] h-full shrink-0 bg-white">
            <svg width="20" height="25" viewBox="0 0 20 25"><path d="M0 0l20 25M20 0L0 25" stroke="#8b1a1a" strokeWidth="1.6" /></svg>
          </div>
          {paletteColors.map(c => <div key={c} className={`${c} w-[24.44px] h-full shrink-0`} />)}
        </div>
        <div className="flex-1 flex justify-center items-start pt-[1px]">
          <svg width="10" height="22" viewBox="0 0 10 22"><path d="M10 0L0 11l10 11z" fill="#2e3436" /></svg>
        </div>
      </div>
      <div className="h-[24px] w-[2377px] shrink-0 bg-[#c2c4c3] pt-[8px]">
        <div className="w-[524px] h-[11px] rounded-full bg-[#7a7c7c]" />
      </div>

      {/* Status bar */}
      <div className="relative h-[59px] shrink-0 flex items-center text-[17px]">
        <div className="w-[235px] h-full shrink-0 flex flex-col">
          <div className="h-[31px] flex items-center pt-[6px]">
            <div className="w-[124px]">Fill:</div>
            <div className="italic">None</div>
          </div>
          <div className="h-[28px] flex items-center">
            <div className="w-[69px]">Stroke:</div>
            <div className="w-[108px] h-full bg-black" />
            <div className="ml-[7px] text-[18px] text-[#555]">0.02</div>
          </div>
        </div>
        <div className="w-[25px] shrink-0 text-[18px] text-[#555]">O:</div>
        <div className="w-[85px] h-[49px] shrink-0 flex bg-white border-2 border-[#cfcfcd] rounded-[7px] overflow-hidden">
          <div className="flex-1 flex items-center pl-[17px] text-[19px]">0</div>
          <SpinCol up="#9a9c9c" />
        </div>
        <div className="w-[15px] h-full shrink-0 flex justify-center"><div className="w-[1.5px] h-full bg-[#c8c8c6]" /></div>
        <div className="w-[48px] shrink-0 flex justify-center">
          <svg width="24" height="24" viewBox="0 0 24 24"><path d="M12 1v5M5 3l3 4M19 3l-3 4M1 8l4 3M23 8l-4 3" stroke="#222" strokeWidth="2" /><path d="M1 15c5-8 17-8 22 0-5 8-17 8-22 0z" fill="#222" /><circle cx="12" cy="15" r="4.5" fill="#ddd" /><circle cx="12" cy="15" r="2.5" fill="#111" /></svg>
        </div>
        <div className="w-[52px] shrink-0 flex justify-center"><OpenLock /></div>
        <div className="ml-[3px] w-[158px] h-[48px] shrink-0 flex items-center bg-gradient-to-b from-[#e8e8e6] to-[#d2d2d0] border-2 border-[#c2c2c0] rounded-[7px] pl-[17px] text-[19px]">
          <span className="w-[108px] pt-[3px]">•Layer 1</span>
          <Tri />
        </div>
        <div className="ml-[6px] flex-1 pt-[5px] text-[21px] tracking-[0.47px] text-[#3a3f41] whitespace-pre"><b>Path</b> 143 nodes in layer <b>Layer 1</b>. Click selection to toggle scale/rotation handles.</div>
        <div className="w-[250px] h-full shrink-0 border-l-2 border-[#cfcfcd] flex items-center">
          <div className="w-[122px] h-full flex flex-col pl-[3px] pt-[5px] text-[18px]">
            <div className="h-[27px] flex items-center"><span className="w-[33px]">X:</span><span>276.67</span></div>
            <div className="h-[27px] flex items-center"><span className="w-[33px]">Y:</span><span>261.64</span></div>
          </div>
          <div className="w-[24px] text-[18px]">Z:</div>
          <div className="w-[110px] h-[49px] shrink-0 flex bg-white border-2 border-[#cfcfcd] rounded-[7px] overflow-hidden">
            <div className="flex-1 flex items-center pl-[22px] text-[19px] text-[#111]">122%</div>
            <div className="w-[26px] bg-[#fbfbfb] border-l border-[#e6e6e6]" />
          </div>
        </div>
        <div className="absolute right-[4px] top-[13px]"><Tri up /></div>
        <div className="absolute right-0 bottom-0 w-[26px] h-[27px] bg-[#f0f0f0] border-l border-t border-[#cfcfcd]">
          <svg width="26" height="27" viewBox="0 0 26 27"><path d="M8 27L26 8M15 27L26 15M22 27l4-4" stroke="#a8a8a8" strokeWidth="1.4" /></svg>
        </div>
      </div>
    </div>
  )
}
